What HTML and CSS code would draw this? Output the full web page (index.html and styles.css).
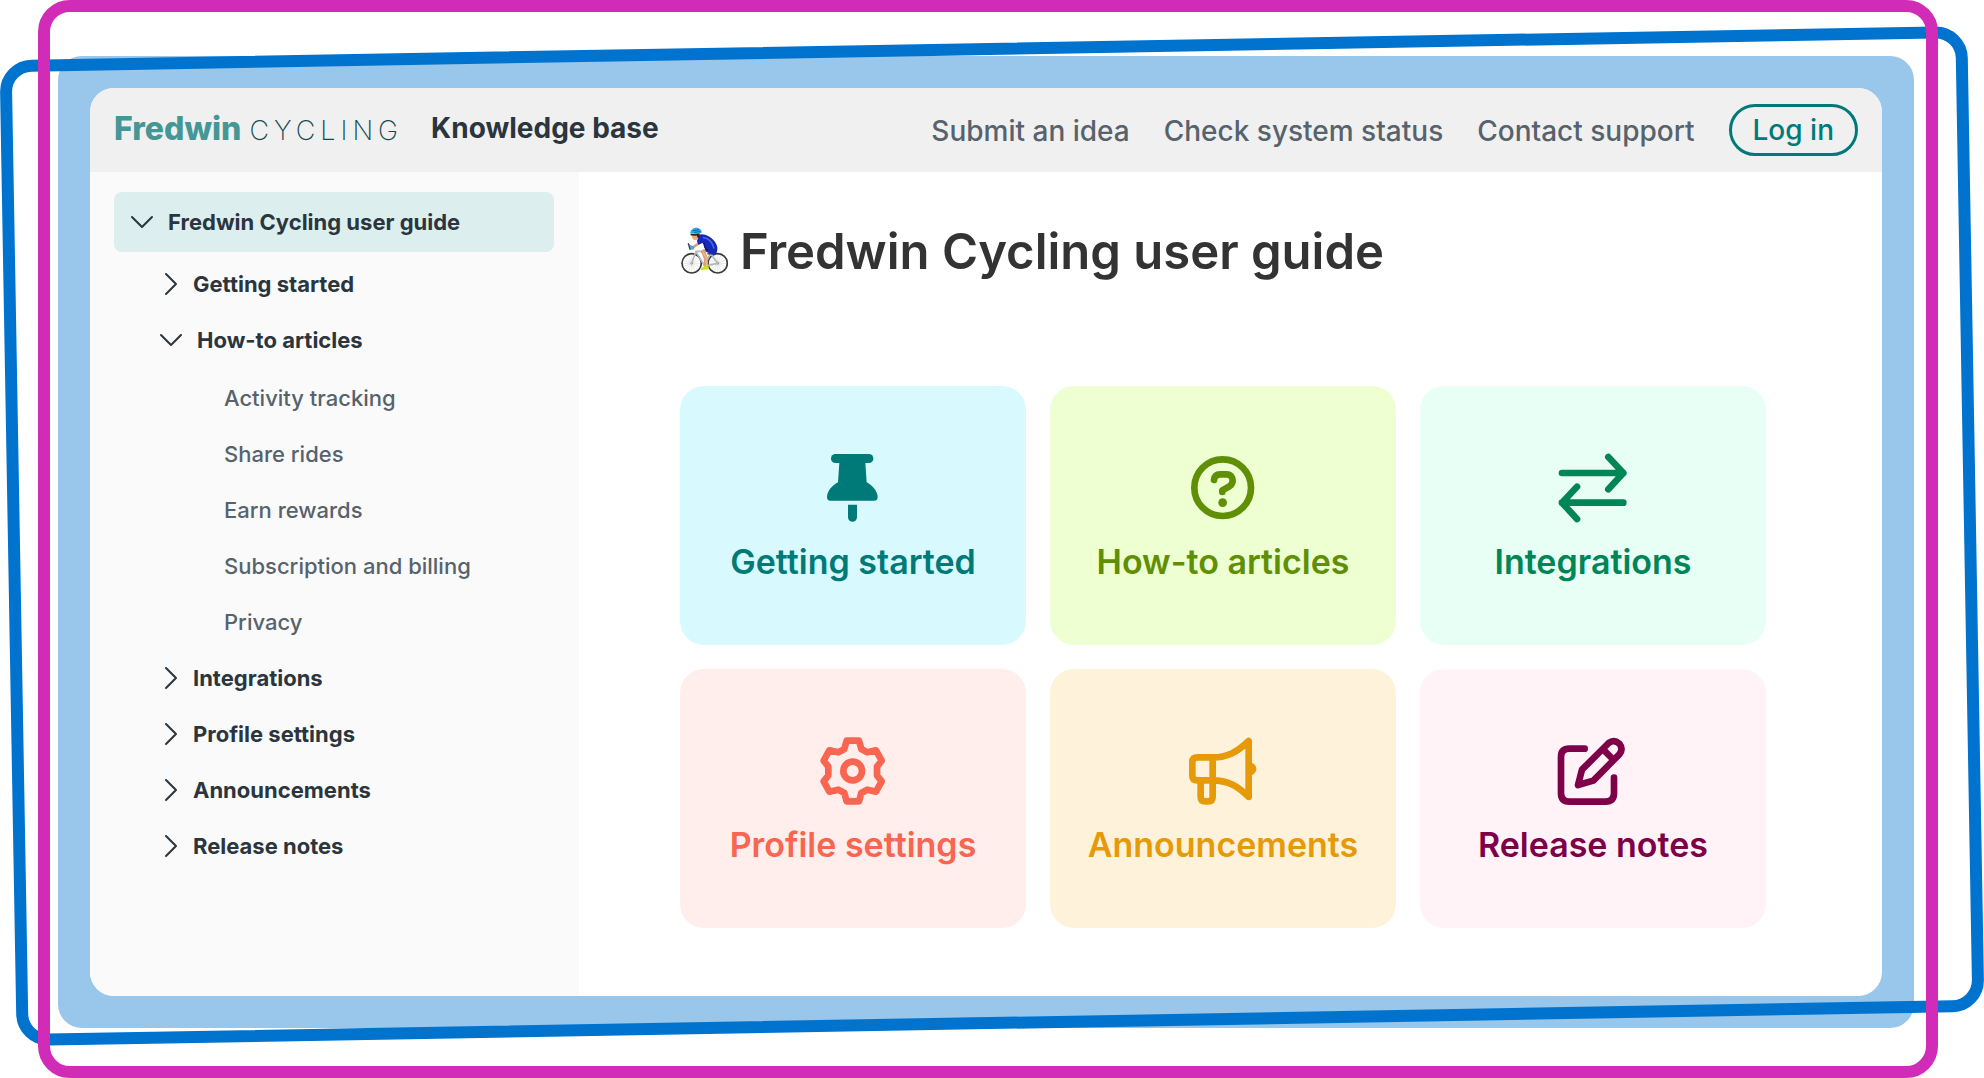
FILE: index.html
```html
<!DOCTYPE html>
<html lang="en">
<head>
    <meta charset="UTF-8">
    <meta name="viewport" content="width=device-width, initial-scale=1.0">
    <title>Fredwin Cycling Knowledge base</title>
    <link rel="stylesheet" href="styles.css">
</head>
<body>
    <div class="stage">
        <div class="backdrop">
            <div class="panel">
                <header class="topbar">
                    <div class="brand">
                        <a href="#" class="logo"><span class="logo-name">Fredwin</span><span class="logo-word">CYCLING</span></a>
                        <span class="site-title">Knowledge base</span>
                    </div>
                    <nav class="top-links">
                        <a href="#">Submit an idea</a>
                        <a href="#">Check system status</a>
                        <a href="#">Contact support</a>
                    </nav>
                    <button type="button" class="login">Log in</button>
                </header>

                <div class="content">
                    <nav class="sidebar">
                        <button type="button" class="guide">
                            <svg class="chevron" viewBox="0 0 24 24"><path d="M2 7l10 10L22 7"/></svg>
                            Fredwin Cycling user guide
                        </button>
                        <ul class="tree">
                            <li><button type="button"><svg class="chevron" viewBox="0 0 24 24"><path d="M7 2l10 10L7 22"/></svg>Getting started</button></li>
                            <li>
                                <button type="button" class="open"><svg class="chevron" viewBox="0 0 24 24"><path d="M2 7l10 10L22 7"/></svg>How-to articles</button>
                                <ul class="articles">
                                    <li><a href="#">Activity tracking</a></li>
                                    <li><a href="#">Share rides</a></li>
                                    <li><a href="#">Earn rewards</a></li>
                                    <li><a href="#">Subscription and billing</a></li>
                                    <li><a href="#">Privacy</a></li>
                                </ul>
                            </li>
                            <li><button type="button"><svg class="chevron" viewBox="0 0 24 24"><path d="M7 2l10 10L7 22"/></svg>Integrations</button></li>
                            <li><button type="button"><svg class="chevron" viewBox="0 0 24 24"><path d="M7 2l10 10L7 22"/></svg>Profile settings</button></li>
                            <li><button type="button"><svg class="chevron" viewBox="0 0 24 24"><path d="M7 2l10 10L7 22"/></svg>Announcements</button></li>
                            <li><button type="button"><svg class="chevron" viewBox="0 0 24 24"><path d="M7 2l10 10L7 22"/></svg>Release notes</button></li>
                        </ul>
                    </nav>

                    <main>
                        <h1>
                            <!-- cyclist -->
                            <svg class="cyclist" viewBox="30 18 144 144" fill="none" stroke-linecap="round" stroke-linejoin="round">
                                <g stroke="#b9b9b9" stroke-width="1">
                                    <path d="M38 130h54M65 103v54M46 111l38 38M84 111l-38 38M55 105l20 50M75 105l-20 50M40 120l50 20M90 120l-50 20"/>
                                    <path d="M116 130h54M143 103v54M124 111l38 38M162 111l-38 38M133 105l20 50M153 105l-20 50M118 120l50 20M168 120l-50 20"/>
                                </g>
                                <circle cx="65" cy="130" r="29" stroke="#3a3a3a" stroke-width="5"/>
                                <circle cx="143" cy="130" r="29" stroke="#3a3a3a" stroke-width="5"/>
                                <circle cx="65" cy="130" r="3" fill="#555"/>
                                <circle cx="143" cy="130" r="3" fill="#555"/>
                                <path d="M65 130l13-36M78 96l26 42 39-8-22-30-17 38M78 94h36" stroke="#b4b7bb" stroke-width="5"/>
                                <path d="M122 92l-3 10M114 101h15" stroke="#4f5357" stroke-width="5"/>
                                <path d="M90 68L73 79 63 84" stroke="#d9a277" stroke-width="8"/>
                                <path d="M120 87L99 95l8 18 1 28" stroke="#d9a277" stroke-width="12"/>
                                <path d="M100 98l9 16 1 24" stroke="#eab98e" stroke-width="4"/>
                                <path d="M86 44c16-5 32 2 45 17 12 13 15 30 6 42-9 2-20-2-30-9l-5-18-5-7-12 5-4-10z" fill="#1727b8"/>
                                <path d="M101 53c13 1 25 14 31 31" stroke="#3e68e8" stroke-width="5"/>
                                <path d="M103 70c-1 9 3 18 10 20" stroke="#0b1575" stroke-width="4"/>
                                <ellipse cx="76" cy="48" rx="10" ry="12" fill="#e3ad80"/>
                                <path d="M66 43l12 1 6 10 5-2V40z" fill="#30241f"/>
                                <path d="M64 44l13 1" stroke="#222" stroke-width="5"/>
                                <path d="M61 41c-1-12 11-20 23-17 9 3 13 10 10 16l-13-2z" fill="#2aa7ea"/>
                                <path d="M70 32l16-3M73 37l17-2" stroke="#096ba8" stroke-width="3"/>
                                <path d="M57 71l1 16 12 2 4-8-12-5z" fill="#43a9d9"/>
                                <path d="M55 71l5 17" stroke="#3b4449" stroke-width="4"/>
                                <path d="M103 138l12-2 2 11-24 4c-3-7 4-7 10-13z" fill="#c8e510"/>
                            </svg>
                            Fredwin Cycling user guide
                        </h1>

                        <div class="cards">
                            <a href="#" class="card started">
                                <svg class="card-icon solid" viewBox="0 0 216 216">
                                    <rect x="42" y="6" width="127" height="27" rx="13"/>
                                    <path d="M67 32H145L149 91C166 100 182 118 182 135Q182 146 172 146H40Q30 146 30 135C30 118 46 100 63 91Z"/>
                                    <path d="M93 158h27v38a13 13 0 0 1-27 0z"/>
                                </svg>
                                Getting started
                            </a>
                            <a href="#" class="card howto">
                                <svg class="card-icon" viewBox="0 0 216 216">
                                    <circle cx="107" cy="107" r="85"/>
                                    <path d="M81 84q2-17 18-17h20c12 0 18 8 18 19 0 7-4 13-10 17l-21 12v5"/>
                                    <circle class="dot" cx="107" cy="152" r="13"/>
                                </svg>
                                How-to articles
                            </a>
                            <a href="#" class="card integrations">
                                <svg class="card-icon" viewBox="0 0 216 216">
                                    <path d="M15 63H199M154 15l45 48-45 49M199 152H15M60 104l-45 48 45 49"/>
                                </svg>
                                Integrations
                            </a>
                            <a href="#" class="card profile">
                                <svg class="card-icon" viewBox="0 0 216 216">
                                    <path d="M89 17H126L133 42L151 52L177 46L194 77L180 95V121L194 139L177 170L151 164L133 174L126 199H89L82 174L64 164L37 170L20 139L34 121V95L20 77L37 46L64 52L82 42Z"/>
                                    <circle cx="107" cy="108" r="28"/>
                                </svg>
                                Profile settings
                            </a>
                            <a href="#" class="card announcements">
                                <svg class="card-icon" viewBox="0 0 216 216">
                                    <path d="M77 67H32q-16 0-16 14v41q0 14 16 14h45M77 67v118q0 14-14 14h-8q-14 0-14-14v-48M77 67C120 67 150 52 185 18V186C150 151 120 136 77 136"/>
                                    <path class="dot" d="M190 82c9 2 18 10 18 20s-9 18-18 20z"/>
                                </svg>
                                Announcements
                            </a>
                            <a href="#" class="card release">
                                <svg class="card-icon" viewBox="0 0 216 216">
                                    <path d="M83 41H37q-25 0-25 25V175q0 25 25 25H145q26 0 26-25V128"/>
                                    <path d="M63 150L75 104L155 24q16-12 32 2q13 16 0 32L109 137ZM139 44L167 72"/>
                                </svg>
                                Release notes
                            </a>
                        </div>
                    </main>
                </div>
            </div>
        </div>
        <!-- the two outline frames lie over the page edges -->
        <div class="frame frame-blue"></div>
        <div class="frame frame-pink"></div>
    </div>
</body>
</html>
```
FILE: styles.css
```css
* {
    box-sizing: border-box;
}
body {
    margin: 0;
    font-family: Inter, "Liberation Sans", sans-serif;
    background: #fff;
    color: #2b353d;
}
a {
    color: inherit;
    text-decoration: none;
}
button {
    font: inherit;
    color: inherit;
    background: none;
    border: none;
    padding: 0;
    cursor: pointer;
}
ul {
    list-style: none;
    margin: 0;
    padding: 0;
}
.stage {
    position: relative;
    display: flex;
    min-height: 100vh;
    padding: 56px 70px 50px 58px;
    overflow: hidden;
}
.backdrop {
    flex: 1;
    display: flex;
    padding: 32px;
    border-radius: 24px;
    background: #99c6eb;
}
.panel {
    flex: 1;
    display: flex;
    flex-direction: column;
    border-radius: 24px;
    background: #fff;
    overflow: hidden;
}

/* outline frames */
.frame {
    position: absolute;
    border-radius: 32px;
    border: 12px solid;
    pointer-events: none;
}
.frame-blue {
    inset: 43px 8px 49px 8px;
    border-color: #0073cf;
    transform: rotate(-1deg);
}
.frame-pink {
    inset: 0 46px 0 38px;
    border-color: #d02cb7;
}

/* top bar */
.topbar {
    display: flex;
    align-items: center;
    height: 84px;
    padding: 0 24px;
    background: #f0f0f0;
}
.brand {
    display: flex;
    align-items: center;
    gap: 28px;
    padding-bottom: 4px;
}
.logo {
    display: flex;
    align-items: baseline;
    gap: 8px;
}
.logo-name {
    font-size: 32px;
    font-weight: 800;
    color: #459796;
}
.logo-word {
    font-size: 27px;
    font-weight: 200;
    letter-spacing: 5px;
    color: #16494c;
}
.site-title {
    font-size: 28px;
    font-weight: 700;
}
.top-links {
    display: flex;
    gap: 34px;
    margin-left: auto;
    padding-top: 2px;
    font-size: 28px;
    font-weight: 500;
    color: #56626c;
}
.login {
    height: 52px;
    margin-left: 34px;
    padding: 0 21px;
    border: 3px solid #007a78;
    border-radius: 26px;
    font-size: 28px;
    font-weight: 500;
    color: #007a78;
}

.content {
    flex: 1;
    display: flex;
}

/* sidebar */
.sidebar {
    flex: 0 0 489px;
    padding: 20px 25px 20px 24px;
    background: #fafafa;
    font-size: 22px;
}
.sidebar button {
    display: flex;
    align-items: center;
    gap: 10px;
    height: 56px;
    font-weight: 700;
}
.sidebar .guide {
    width: 100%;
    height: 60px;
    gap: 14px;
    padding-left: 16px;
    border-radius: 8px;
    background: #dceeee;
}
.sidebar .open {
    gap: 14px;
}
.chevron {
    width: 24px;
    height: 24px;
    fill: none;
    stroke: #2b353d;
    stroke-width: 2;
    stroke-linecap: round;
    stroke-linejoin: round;
}
.tree {
    padding: 4px 0 0 45px;
}
.articles {
    padding: 2px 0 0 65px;
    font-weight: 500;
    color: #56626c;
}
.articles a {
    display: block;
    line-height: 56px;
}

/* main area */
main {
    flex: 1;
    padding: 50px 116px 60px 101px;
}
h1 {
    display: flex;
    align-items: center;
    gap: 12px;
    margin: 0 0 104px;
    font-size: 49px;
    line-height: 60px;
    font-weight: 600;
    color: #333;
}
.cyclist {
    width: 48px;
    height: 48px;
    margin-bottom: 4px;
}
.cards {
    display: grid;
    grid-template-columns: repeat(3, 1fr);
    gap: 24px;
}
.card {
    display: flex;
    flex-direction: column;
    align-items: center;
    gap: 16px;
    height: 259px;
    padding-top: 66px;
    border-radius: 24px;
    font-size: 34px;
    line-height: 44px;
    font-weight: 600;
}
.card-icon {
    width: 72px;
    height: 72px;
    fill: none;
    stroke: currentColor;
    stroke-width: 20;
    stroke-linecap: round;
    stroke-linejoin: round;
}
.card-icon.solid,
.card-icon .dot {
    fill: currentColor;
    stroke: none;
}
.started {
    background: #d8faff;
    color: #007a78;
}
.howto {
    background: #eeffd2;
    color: #5f8f05;
}
.integrations {
    background: #e8fff5;
    color: #008556;
}
.profile {
    background: #ffeeeb;
    color: #f86550;
}
.announcements {
    background: #fff2da;
    color: #e69a08;
}
.release {
    background: #fff3f8;
    color: #7d0048;
}
```
